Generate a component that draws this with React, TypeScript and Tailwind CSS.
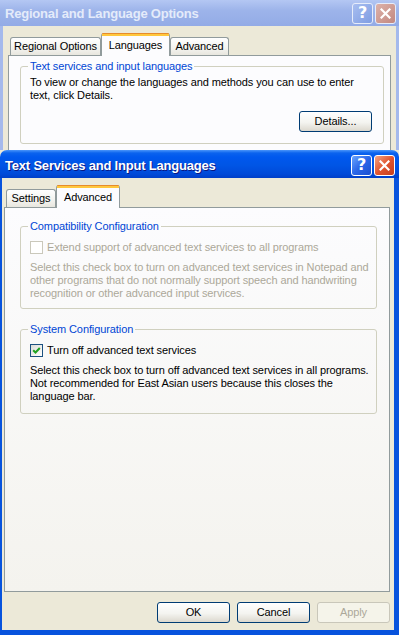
import React from 'react';

const sans = "font-['Liberation_Sans',Arial,sans-serif]";

function CaptionButton({ kind, active }: { kind: 'help' | 'close'; active: boolean }) {
  const fill =
    kind === 'help'
      ? active
        ? 'bg-[linear-gradient(135deg,#6AA6FF,#2A66E8_50%,#1B4FD0)]'
        : 'bg-[linear-gradient(135deg,#A8BEF0,#7F9DE2)]'
      : active
        ? 'bg-[linear-gradient(135deg,#F4A584,#E15530_50%,#C63F1E)]'
        : 'bg-[linear-gradient(135deg,#DDB2AA,#C28880)]';
  return (
    <div
      className={`w-[21px] h-[21px] rounded-[3px] border ${active ? 'border-white' : 'border-[#E6ECFA]'} ${fill} flex items-center justify-center`}
    >
      {kind === 'help' ? (
        <span className="text-white font-bold text-[16px] leading-none font-['DejaVu_Sans',sans-serif]">?</span>
      ) : (
        <svg width="11" height="11" viewBox="0 0 11 11">
          <path d="M1.5 1.5 L9.5 9.5 M9.5 1.5 L1.5 9.5" stroke="white" strokeWidth="2.2" strokeLinecap="square" />
        </svg>
      )}
    </div>
  );
}

function TitleBar({ title, active }: { title: string; active: boolean }) {
  return (
    <div
      className={`flex items-center justify-between pl-[5px] ${
        active
          ? 'h-[28px] pr-[4px] pt-[2px] rounded-t-[7px] bg-[linear-gradient(180deg,#4A95FA_0px,#0B63EE_3px,#0058EE_7px,#0055E5_55%,#004AD9_85%,#003FC8_100%)]'
          : 'h-[26px] pr-[3px] bg-[linear-gradient(180deg,#B4C7F3_0%,#9DB4EA_40%,#93ABE6_100%)]'
      }`}
    >
      <span
        className={`font-bold text-[13px] tracking-[-0.2px] ${
          active ? 'text-white [text-shadow:1px_1px_0_#0A1883]' : 'text-[#E4EBFA]'
        }`}
      >
        {title}
      </span>
      <div className="flex gap-[2px]">
        <CaptionButton kind="help" active={active} />
        <CaptionButton kind="close" active={active} />
      </div>
    </div>
  );
}

function Tab({ label, selected, width }: { label: string; selected?: boolean; width: string }) {
  if (selected) {
    return (
      <div
        className={`${width} relative z-10 -mb-px h-[23px] rounded-t-[3px] border-x border-[#919B9C] bg-[#FCFCFE] flex flex-col`}
      >
        <div className="h-[1px] bg-[#E68B2C] rounded-t-[3px]" />
        <div className="h-[2px] bg-[#FFC73C]" />
        <div className="flex-1 flex items-center justify-center pb-[2px]">{label}</div>
      </div>
    );
  }
  return (
    <div
      className={`${width} h-[18px] rounded-t-[3px] border border-b-0 border-[#919B9C] bg-[linear-gradient(180deg,#FFFFFF,#F3F3EF_60%,#E8E6DE)] flex items-center justify-center`}
    >
      {label}
    </div>
  );
}

function Group({ label, children, className }: { label: string; children: React.ReactNode; className?: string }) {
  return (
    <fieldset className={`min-w-0 border border-[#D0D0BF] rounded-[3px] ${className ?? ''}`}>
      <legend className="ml-[7px] px-[2px] text-[#0046D5]">{label}</legend>
      <div className="px-[9px]">{children}</div>
    </fieldset>
  );
}

function Checkbox({ checked, disabled }: { checked?: boolean; disabled?: boolean }) {
  return (
    <div
      className={`w-[13px] h-[13px] shrink-0 border flex items-center justify-center ${
        disabled ? 'border-[#CAC8BB] bg-white' : 'border-[#1C5180] bg-[linear-gradient(135deg,#DCDCD7,#FFFFFF)]'
      }`}
    >
      {checked && (
        <svg width="9" height="9" viewBox="0 0 9 9">
          <path d="M1.2 4.2 L3.5 6.5 L7.8 2" stroke="#21A121" strokeWidth="2" fill="none" />
        </svg>
      )}
    </div>
  );
}

function XPButton({ label, disabled }: { label: string; disabled?: boolean }) {
  return (
    <div
      className={`w-[73px] h-[21px] rounded-[3px] border flex items-center justify-center ${
        disabled
          ? 'border-[#C9C7BA] text-[#ACA899] bg-[#F5F4EA]'
          : 'border-[#003C74] bg-[linear-gradient(180deg,#FFFFFF,#F4F4F0_55%,#DCD8CE)]'
      }`}
    >
      {label}
    </div>
  );
}

function RegionalDialog() {
  return (
    <div className="h-[150px] flex flex-col overflow-hidden">
      <TitleBar title="Regional and Language Options" active={false} />
      <div className="flex-1 flex flex-col bg-[#ECE9D8] border-x-[3px] border-[#A4B9EC] px-[5px] pt-[7px]">
        <div className="flex items-end pl-[2px]">
          <Tab label="Regional Options" width="w-[91px]" />
          <Tab label="Languages" width="w-[69px]" selected />
          <Tab label="Advanced" width="w-[59px]" />
        </div>
        <div className="flex-1 border border-b-0 border-[#919B9C] bg-[#FCFCFE] pl-[11px] pr-[6px] pt-[4px]">
          <Group label="Text services and input languages" className="pb-[11px]">
            <p className="mt-[3px] whitespace-nowrap">
              To view or change the languages and methods you can use to enter
              <br />
              text, click Details.
            </p>
            <div className="flex justify-end mt-[9px] pr-[2px]">
              <XPButton label="Details..." />
            </div>
          </Group>
        </div>
      </div>
    </div>
  );
}

function TextServicesDialog() {
  return (
    <div className="h-[485px] flex flex-col">
      <TitleBar title="Text Services and Input Languages" active />
      <div className="flex-1 flex flex-col bg-[#ECE9D8] border-l-[2px] border-r-[5px] border-b-[5px] border-[#0753DD] pl-[2px] pr-[4px] pt-[7px] pb-[7px]">
        <div className="flex items-end pl-[2px]">
          <Tab label="Settings" width="w-[50px]" />
          <Tab label="Advanced" width="w-[64px]" selected />
        </div>
        <div className="flex-1 border border-[#919B9C] bg-[linear-gradient(180deg,#FCFCFE,#F4F3EE)] pl-[15px] pr-[12px] pt-[12px] flex flex-col gap-[14px]">
          <Group label="Compatibility Configuration" className="pb-[8px] text-[#ACA899]">
            <div className="flex items-center gap-[4px] mt-[8px]">
              <Checkbox disabled />
              <span>Extend support of advanced text services to all programs</span>
            </div>
            <p className="mt-[7px] whitespace-nowrap">
              Select this check box to turn on advanced text services in Notepad and
              <br />
              other programs that do not normally support speech and handwriting
              <br />
              recognition or other advanced input services.
            </p>
          </Group>
          <Group label="System Configuration" className="pb-[10px]">
            <div className="flex items-center gap-[4px] mt-[8px]">
              <Checkbox checked />
              <span>Turn off advanced text services</span>
            </div>
            <p className="mt-[7px] whitespace-nowrap">
              Select this check box to turn off advanced text services in all programs.
              <br />
              Not recommended for East Asian users because this closes the
              <br />
              language bar.
            </p>
          </Group>
        </div>
        <div className="flex justify-end gap-[7px] mt-[10px]">
          <XPButton label="OK" />
          <XPButton label="Cancel" />
          <XPButton label="Apply" disabled />
        </div>
      </div>
    </div>
  );
}

export default function App() {
  return (
    <div
      className={`w-[399px] h-[635px] overflow-hidden bg-[#ECE9D8] text-[11px] leading-[13px] tracking-[-0.1px] text-black ${sans}`}
    >
      <RegionalDialog />
      <TextServicesDialog />
    </div>
  );
}
